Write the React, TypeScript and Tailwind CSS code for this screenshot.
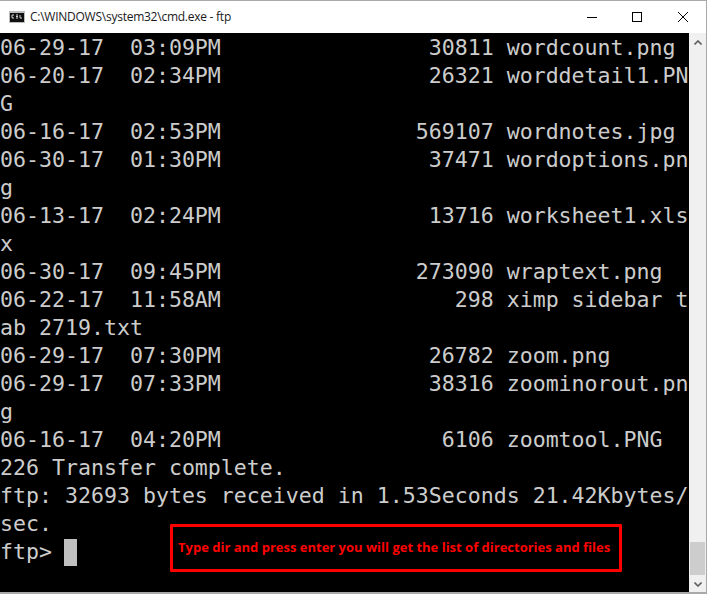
const lines = [
  "06-29-17  03:09PM                30811 wordcount.png",
  "06-20-17  02:34PM                26321 worddetail1.PN",
  "G",
  "06-16-17  02:53PM               569107 wordnotes.jpg",
  "06-30-17  01:30PM                37471 wordoptions.pn",
  "g",
  "06-13-17  02:24PM                13716 worksheet1.xls",
  "x",
  "06-30-17  09:45PM               273090 wraptext.png",
  "06-22-17  11:58AM                  298 ximp sidebar t",
  "ab 2719.txt",
  "06-29-17  07:30PM                26782 zoom.png",
  "06-29-17  07:33PM                38316 zoominorout.pn",
  "g",
  "06-16-17  04:20PM                 6106 zoomtool.PNG",
  "226 Transfer complete.",
  "ftp: 32693 bytes received in 1.53Seconds 21.42Kbytes/",
  "sec.",
];

export default function App() {
  return (
    <div className="relative flex h-[594px] w-[707px] flex-col overflow-hidden border-t border-r border-b-2 border-[#a9a9a9] bg-white">
      <div className="flex h-[32px] shrink-0 items-center bg-white">
        <svg width="16" height="16" viewBox="0 0 16 16" className="ml-[9px] mr-[5px] shrink-0">
          <rect x="0" y="2" width="16" height="12" fill="#bdbdbd" />
          <rect x="1" y="4" width="14" height="9" fill="#101010" />
          <path d="M3 6h2M3 6v3M3 9h2M7 6h2M7 7.5h2M7 9h2M11 6v3M11 9h2" stroke="#d0d0d0" strokeWidth="1" fill="none" />
        </svg>
        <span className="font-['Open_Sans','Liberation_Sans',sans-serif] text-[12px] tracking-[-0.25px] text-[#1a1a1a] whitespace-pre">C:\WINDOWS\system32\cmd.exe - ftp</span>
        <div className="ml-auto flex items-center">
          <svg width="10" height="10" viewBox="0 0 10 10" className="mr-[35px]"><path d="M0 5.5h10" stroke="#000" strokeWidth="1" /></svg>
          <svg width="10" height="10" viewBox="0 0 10 10" className="mr-[36px]"><rect x="0.5" y="0.5" width="9" height="9" fill="none" stroke="#000" strokeWidth="1" /></svg>
          <svg width="10" height="10" viewBox="0 0 10 10" className="mr-[18px]"><path d="M0 0L10 10M10 0L0 10" stroke="#000" strokeWidth="1" /></svg>
        </div>
      </div>
      <div className="flex min-h-0 flex-1">
        <div className="min-w-0 flex-1 overflow-hidden bg-black pt-[1px] font-['DejaVu_Sans_Mono',monospace] text-[21.58px] leading-[28px] text-[#cccccc]">
          {lines.map((l, i) => (
            <div key={i} className="h-[28px] whitespace-pre">{l}</div>
          ))}
          <div className="flex h-[28px] items-center whitespace-pre">
            ftp&gt; <span className="-ml-px mt-[1px] inline-block h-[27px] w-[13px] bg-[#c0c0c0]" />
          </div>
        </div>
        <div className="flex w-[17px] shrink-0 flex-col items-center bg-[#f0f0f0]">
          <svg width="8" height="5" viewBox="0 0 8 5" className="mt-[7px]"><path d="M0.5 4.5L4 1l3.5 3.5" stroke="#606060" strokeWidth="1.6" fill="none" /></svg>
          <div className="mt-auto mb-[7px] h-[33px] w-[15px] bg-[#cdcdcd]" />
          <svg width="8" height="5" viewBox="0 0 8 5" className="mb-[5px]"><path d="M0.5 0.5L4 4l3.5-3.5" stroke="#606060" strokeWidth="1.6" fill="none" /></svg>
        </div>
      </div>
      <div className="absolute left-[170px] top-[523px] flex h-[48px] w-[452px] items-center rounded-[1px] border-[3px] border-[#ff0000] pl-[5px] font-['Open_Sans',sans-serif] text-[13px] font-bold whitespace-pre text-[#ff0000]">
        Type dir and press enter you will get the list of directories and files
      </div>
    </div>
  );
}
